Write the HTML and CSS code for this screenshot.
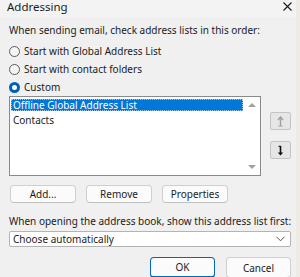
FILE: index.html
```html
<!DOCTYPE html>
<html lang="en">
<head>
    <meta charset="utf-8">
    <title>Addressing</title>
    <link rel="stylesheet" href="styles.css">
</head>
<body>
    <div class="dialog">
        <header class="titlebar">
            <span class="title">Addressing</span>
            <span class="close">
                <svg width="9" height="9" viewBox="0 0 9 9"><path d="M0.5 0.5 L8.5 8.5 M8.5 0.5 L0.5 8.5" stroke="#1a1a1a" stroke-width="1.1" fill="none"/></svg>
            </span>
        </header>

        <main class="content">
            <p class="label first">When sending email, check address lists in this order:</p>

            <div class="radios">
                <label class="radio"><span class="dot"></span>Start with Global Address List</label>
                <label class="radio"><span class="dot"></span>Start with contact folders</label>
                <label class="radio checked"><span class="dot"></span>Custom</label>
            </div>

            <div class="listRow">
                <div class="listbox">
                    <ul class="items">
                        <li class="item selected">Offline Global Address List</li>
                        <li class="item">Contacts</li>
                    </ul>
                    <div class="scrollbar">
                        <span class="arrow up"></span>
                        <span class="arrow down"></span>
                    </div>
                </div>
                <div class="moveButtons">
                    <button class="move disabled">
                        <svg width="7" height="11" viewBox="0 0 7 11"><path d="M3.5 1 V10 M1 4 L3.5 1 L6 4" stroke="#a0a0a0" stroke-width="1.4" fill="none"/><path d="M1.5 10 H5.5" stroke="#a0a0a0" stroke-width="1"/></svg>
                    </button>
                    <button class="move">
                        <svg width="7" height="11" viewBox="0 0 7 11"><path d="M3.5 1 V9" stroke="#111" stroke-width="1.6" fill="none"/><path d="M1.5 1.5 L3.5 1" stroke="#111" stroke-width="1.2"/><path d="M0.8 7.5 L3.5 10.5 L6.2 7.5 Z" fill="#111"/></svg>
                    </button>
                </div>
            </div>

            <div class="actions">
                <button class="btn">Add...</button>
                <button class="btn">Remove</button>
                <button class="btn">Properties</button>
            </div>

            <p class="label second">When opening the address book, show this address list first:</p>

            <div class="combo">
                <span>Choose automatically</span>
                <svg width="9" height="6" viewBox="0 0 9 6"><path d="M0.5 0.8 L4.5 4.8 L8.5 0.8" stroke="#555" stroke-width="1" fill="none"/></svg>
            </div>

            <div class="footer">
                <button class="btn default">OK</button>
                <button class="btn">Cancel</button>
            </div>
        </main>
    </div>
    <div class="edge"></div>
</body>
</html>
```
FILE: styles.css
```css
html {
    margin: 0;
}

body {
    margin: 0;
    width: 300px;
    height: 277px;
    overflow: hidden;
    display: flex;
    background: #f0f0f0;
    font-family: "Noto Sans", "Open Sans", sans-serif;
    font-size: 10px;
    color: #1b1b1b;
}

.dialog {
    width: 296px;
    flex: none;
}

.edge {
    flex: 1;
    background: #efebe2;
}

.titlebar {
    height: 17px;
    display: flex;
    justify-content: space-between;
    align-items: flex-start;
    background: #f3f3f3;
}

.title {
    margin: 0 0 0 7px;
    font-size: 11.5px;
    line-height: 13px;
}

.close {
    margin: 2px 4px 0 0;
    display: flex;
}

.content {
    padding: 0 5px 0 9px;
}

.label {
    margin: 0;
    line-height: 14px;
    white-space: nowrap;
}

.first {
    margin-top: 6px;
}

.radios {
    margin-top: 5px;
    display: flex;
    flex-direction: column;
}

.radio {
    height: 18px;
    display: flex;
    align-items: center;
    gap: 4px;
}

.dot {
    width: 9px;
    height: 9px;
    border: 1px solid #5c5c5c;
    border-radius: 50%;
    background: #f5f5f5;
}

.checked .dot {
    width: 5px;
    height: 5px;
    border: 3px solid #005fb8;
    background: #fff;
}

.listRow {
    display: flex;
    gap: 9px;
}

.listbox {
    width: 250px;
    height: 78px;
    border: 1px solid #8a8a8a;
    background: #fff;
    display: flex;
}

.items {
    list-style: none;
    margin: 0;
    padding: 2px 0 0 1px;
    flex: 1;
}

.item {
    height: 12px;
    line-height: 12px;
    padding-left: 2px;
    margin-bottom: 3px;
}

.selected {
    background: #0078d7;
    color: #fff;
    outline: 1px dotted #9fc6ec;
    outline-offset: -1px;
}

.scrollbar {
    width: 17px;
    display: flex;
    flex-direction: column;
    justify-content: space-between;
    align-items: center;
    padding: 6px 0 6px;
}

.arrow {
    width: 0;
    height: 0;
    border-left: 4px solid transparent;
    border-right: 4px solid transparent;
}

.up {
    border-bottom: 4px solid #a3a3a3;
}

.down {
    border-top: 4px solid #a3a3a3;
}

.moveButtons {
    padding-top: 16px;
    display: flex;
    flex-direction: column;
    gap: 11px;
}

.move {
    width: 21px;
    height: 18px;
    padding: 0;
    border: 1px solid #c4c4c4;
    border-radius: 2px;
    background: #e6e6e6;
    display: flex;
    align-items: center;
    justify-content: center;
}

.actions {
    margin-top: 9px;
    display: flex;
    gap: 10px;
    padding-left: 1px;
}

.btn {
    width: 66px;
    height: 18px;
    padding: 0;
    border: 1px solid #d0d0d0;
    border-bottom-color: #c0c0c0;
    border-radius: 4px;
    background: #fbfbfb;
    font-family: inherit;
    font-size: 10px;
    color: #1b1b1b;
}

.second {
    margin-top: 11px;
}

.combo {
    margin-top: 3px;
    height: 16px;
    border: 1px solid #b4b4b4;
    border-radius: 2px;
    background: #fff;
    display: flex;
    align-items: center;
    justify-content: space-between;
    padding: 0 5px 0 3px;
    box-sizing: border-box;
    width: 282px;
}

.footer {
    margin-top: 10px;
    display: flex;
    gap: 11px;
    padding-left: 141px;
}

.footer .btn {
    height: 21px;
}

.default {
    border: 1px solid #0067c0;
    border-bottom-width: 2px;
}
```
